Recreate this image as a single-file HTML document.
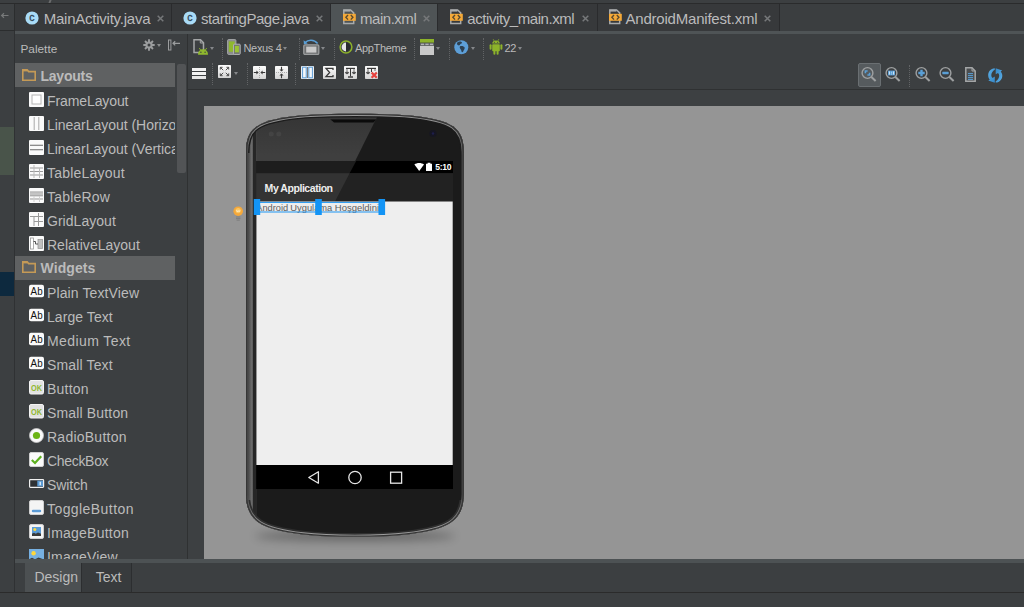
<!DOCTYPE html>
<html>
<head>
<meta charset="utf-8">
<title>main.xml - Android Studio</title>
<style>
*{box-sizing:border-box;margin:0;padding:0}
html,body{width:1024px;height:607px;overflow:hidden;background:#3c3f41;font-family:"Liberation Sans","DejaVu Sans",sans-serif;color:#bbbbbb}
.abs{position:absolute}
svg{display:block;overflow:visible}
#root{position:relative;width:1024px;height:607px;overflow:hidden;background:#3c3f41}
#topstrip{left:0;top:0;width:1024px;height:4px;background:#3c3f41;border-bottom:1px solid #2a2b2c}
#tabbar{left:15px;top:4px;width:1009px;height:27px;background:#3b3e40}
.tab{position:absolute;top:0;height:27px;background:#37393b;border-right:1px solid #2a2b2d;font-size:15px;line-height:27px;color:#bbbbbb;white-space:nowrap}
.tab.active{background:#4f5456;height:27px}
.tab .lbl{position:absolute;top:1px}
.tab .x{position:absolute;top:10.5px}
.tab .ic{position:absolute;top:6.5px}
#leftarrow{left:0;top:4px;width:15px;height:27px;background:#3e4143;border-right:1px solid #2b2d2e;border-bottom:1px solid #2b2d2e}
#tabline{left:15px;top:31px;width:1009px;height:3px;background:#4f5456}
#leftstrip{left:0;top:31px;width:15px;height:576px;background:#3c3f41;border-right:1px solid #2f3133}
#palette{left:15px;top:34px;width:172px;height:526px;background:#3c3f41;overflow:hidden}
.hdr{position:absolute;left:0;width:160px;height:24px;background:#5f6162;font-weight:bold;font-size:14px;line-height:24px;color:#bbbbbb}
.hdr span{position:absolute;left:25.5px;top:0.5px}
.hdr svg{position:absolute;left:7px;top:5.5px}
.item{position:absolute;left:0;width:160px;height:24px;font-size:14px;line-height:24px;color:#bbbbbb;white-space:nowrap;overflow:hidden}
.item span{position:absolute;left:32px;top:0.5px}
.item svg{position:absolute;left:14px;top:3.5px}
#scroll{left:162px;top:30px;width:9px;height:109px;background:#525456;border-radius:2px}
#toolbar{left:188px;top:34px;width:836px;height:55px;background:#3c3f41}
#toolline{left:188px;top:89px;width:836px;height:1px;background:#2f3132}
#canvaswrap{left:188px;top:90px;width:836px;height:470px;background:#3d4042}
#canvas{left:203.5px;top:105.5px;width:821px;height:453px;background:#959595}
#bottomline{left:15px;top:558.5px;width:1009px;height:4px;background:#4d5254}
#bottomtabs{left:15px;top:562.5px;width:1009px;height:29.5px;background:#3c3f41}
.btab{position:absolute;top:0;height:29.5px;font-size:14px;line-height:29.5px;color:#bbbbbb;text-align:center;border-right:1px solid #2f3133}
#bottombar{left:0;top:592px;width:1024px;height:15px;background:#3c3f41;border-top:1px solid #2b2b2b}
.tbtxt{position:absolute;font-size:11px;color:#bbbbbb;line-height:14px;white-space:nowrap}
.sep{position:absolute;width:1px;border-left:1px dotted #626466}
.dd{position:absolute;width:0;height:0;border-left:2.5px solid transparent;border-right:2.5px solid transparent;border-top:3px solid #85878a}
.ti{position:absolute}
</style>
</head>
<body>
<div id="root">
  <div id="topstrip" class="abs"></div>
  <div class="abs" style="left:49px;top:0;width:2px;height:3px;background:#6a6c6d;transform:skewX(-20deg)"></div>
  <div id="leftarrow" class="abs">
    <svg class="abs" style="left:1px;top:7px" width="10" height="9" viewBox="0 0 10 9"><path d="M0.5 4.5H7.5M3 2.2L0.6 4.5L3 6.8" stroke="#77797a" stroke-width="1.2" fill="none"/></svg>
  </div>
  <div id="tabbar" class="abs">
    <div class="tab" style="left:0px;width:157px">
      <svg class="ic" style="left:10.4px" width="14" height="14" viewBox="0 0 14 14"><circle cx="7" cy="7" r="6.6" fill="#a9dbf7"/><text x="6.9" y="10.2" font-size="10.5" text-anchor="middle" fill="#2c4152" stroke="#2c4152" stroke-width="0.3" font-family="Liberation Sans, sans-serif">c</text></svg>
      <span class="lbl" style="left:28.75px;letter-spacing:-0.241px">MainActivity.java</span>
      <svg class="x" style="left:142.25px" width="7" height="7" viewBox="0 0 7 7"><path d="M0.7 0.7L6.3 6.3M6.3 0.7L0.7 6.3" stroke="#76787a" stroke-width="1.5"/></svg>
    </div>
    <div class="tab" style="left:157px;width:159px">
      <svg class="ic" style="left:11.2px" width="14" height="14" viewBox="0 0 14 14"><circle cx="7" cy="7" r="6.6" fill="#a9dbf7"/><text x="6.9" y="10.2" font-size="10.5" text-anchor="middle" fill="#2c4152" stroke="#2c4152" stroke-width="0.3" font-family="Liberation Sans, sans-serif">c</text></svg>
      <span class="lbl" style="left:29.1px;letter-spacing:-0.477px">startingPage.java</span>
      <svg class="x" style="left:143.9px" width="7" height="7" viewBox="0 0 7 7"><path d="M0.7 0.7L6.3 6.3M6.3 0.7L0.7 6.3" stroke="#76787a" stroke-width="1.5"/></svg>
    </div>
    <div class="tab active" style="left:316px;width:107px">
      <svg class="ic" style="left:11.8px;top:5px" width="14" height="15" viewBox="0 0 14 15"><path d="M0.8 1H7.6L10.7 3.9V14.4H0.8Z" fill="none" stroke="#a9abac" stroke-width="1.5"/><path d="M0.8 1.6H7.4" stroke="#a9abac" stroke-width="2"/><rect x="0" y="4.8" width="12.8" height="7" fill="#f4a938"/><path d="M5 6L2.9 8.3L5 10.6M7.8 6L9.9 8.3L7.8 10.6" stroke="#5a4a30" stroke-width="1.4" fill="none"/></svg>
      <span class="lbl" style="left:29px;letter-spacing:-0.471px">main.xml</span>
      <svg class="x" style="left:92.4px" width="7" height="7" viewBox="0 0 7 7"><path d="M0.7 0.7L6.3 6.3M6.3 0.7L0.7 6.3" stroke="#76787a" stroke-width="1.5"/></svg>
    </div>
    <div class="tab" style="left:423px;width:159.5px">
      <svg class="ic" style="left:12.3px;top:5px" width="14" height="15" viewBox="0 0 14 15"><path d="M0.8 1H7.6L10.7 3.9V14.4H0.8Z" fill="none" stroke="#a9abac" stroke-width="1.5"/><path d="M0.8 1.6H7.4" stroke="#a9abac" stroke-width="2"/><rect x="0" y="4.8" width="12.8" height="7" fill="#f4a938"/><path d="M5 6L2.9 8.3L5 10.6M7.8 6L9.9 8.3L7.8 10.6" stroke="#5a4a30" stroke-width="1.4" fill="none"/></svg>
      <span class="lbl" style="left:29.3px;letter-spacing:-0.424px">activity_main.xml</span>
      <svg class="x" style="left:143.8px" width="7" height="7" viewBox="0 0 7 7"><path d="M0.7 0.7L6.3 6.3M6.3 0.7L0.7 6.3" stroke="#76787a" stroke-width="1.5"/></svg>
    </div>
    <div class="tab" style="left:582.5px;width:182px">
      <svg class="ic" style="left:11px;top:5px" width="14" height="15" viewBox="0 0 14 15"><path d="M0.8 1H7.6L10.7 3.9V14.4H0.8Z" fill="none" stroke="#a9abac" stroke-width="1.5"/><path d="M0.8 1.6H7.4" stroke="#a9abac" stroke-width="2"/><rect x="0" y="4.8" width="12.8" height="7" fill="#f4a938"/><path d="M5 6L2.9 8.3L5 10.6M7.8 6L9.9 8.3L7.8 10.6" stroke="#5a4a30" stroke-width="1.4" fill="none"/></svg>
      <span class="lbl" style="left:28px;letter-spacing:-0.21px">AndroidManifest.xml</span>
      <svg class="x" style="left:166.7px" width="7" height="7" viewBox="0 0 7 7"><path d="M0.7 0.7L6.3 6.3M6.3 0.7L0.7 6.3" stroke="#76787a" stroke-width="1.5"/></svg>
    </div>
  </div>
  <div id="tabline" class="abs"></div>
  <div id="leftstrip" class="abs">
    <div class="abs" style="left:0;top:96px;width:14px;height:48px;background:#49544a"></div>
    <div class="abs" style="left:0;top:241px;width:14px;height:24px;background:#0d293e"></div>
  </div>
  <div id="palette" class="abs">
    <div class="tbtxt" style="left:5.5px;top:8px;font-size:11.8px">Palette</div>
    <svg class="abs" style="left:128px;top:5px" width="12" height="12" viewBox="0 0 12 12"><g fill="#9b9d9e"><circle cx="6" cy="6" r="3.6"/><g stroke="#9b9d9e" stroke-width="1.9"><path d="M6 0.3V11.7M0.3 6H11.7M2 2L10 10M10 2L2 10"/></g></g><circle cx="6" cy="6" r="1.5" fill="#3c3f41"/></svg>
    <div class="dd" style="left:142px;top:10px;border-top-color:#8a8c8d"></div>
    <svg class="abs" style="left:153px;top:5px" width="14" height="12" viewBox="0 0 14 12"><rect x="0.5" y="1" width="2.4" height="10" fill="none" stroke="#9b9d9e" stroke-width="1"/><path d="M5 4.3H12M7.2 2.2L5 4.3L7.2 6.4" stroke="#9b9d9e" stroke-width="1.2" fill="none"/></svg>
    <div id="scroll" class="abs"></div>
    <div class="hdr" style="top:29px"><svg width="14" height="12" viewBox="0 0 14 12"><path d="M0.8 11.2V0.8H5.2L6.6 2.6H13.2V11.2Z" fill="none" stroke="#c59a56" stroke-width="1.6"/><path d="M0.8 1.6H5.6" stroke="#c59a56" stroke-width="1.6"/></svg><span style="letter-spacing:-0.241px">Layouts</span></div>
    <div class="item" style="top:54px"><svg width="15" height="15" viewBox="0 0 15 15"><rect width="15" height="15" rx="1" fill="#fafafa"/><rect x="3" y="3" width="9" height="9" fill="#fff" stroke="#b4b4b4" stroke-width="1"/></svg><span style="letter-spacing:-0.099px">FrameLayout</span></div>
    <div class="item" style="top:78px"><svg width="15" height="15" viewBox="0 0 15 15"><rect width="15" height="15" rx="1" fill="#fafafa"/><path d="M5.2 1V14M9.8 1V14" stroke="#a8a8a8" stroke-width="1"/></svg><span style="letter-spacing:-0.029px">LinearLayout (Horizontal)</span></div>
    <div class="item" style="top:102px"><svg width="15" height="15" viewBox="0 0 15 15"><rect width="15" height="15" rx="1" fill="#fafafa"/><path d="M1 5.2H14M1 9.8H14" stroke="#6a6a6a" stroke-width="1.1"/></svg><span style="letter-spacing:-0.029px">LinearLayout (Vertical)</span></div>
    <div class="item" style="top:126px"><svg width="15" height="15" viewBox="0 0 15 15"><rect width="15" height="15" rx="1" fill="#fafafa"/><path d="M1 4H14M1 7.5H14M1 11H14" stroke="#999" stroke-width="1"/><path d="M5 1V14M10.5 4V14" stroke="#bbb" stroke-width="1"/></svg><span style="letter-spacing:0.226px">TableLayout</span></div>
    <div class="item" style="top:150px"><svg width="15" height="15" viewBox="0 0 15 15"><rect width="15" height="15" rx="1" fill="#fafafa"/><rect x="1" y="4.5" width="13" height="3" fill="#c4c4c4"/><path d="M1 4H14M1 7.8H14M1 11H14" stroke="#999" stroke-width="1"/><path d="M5 8V14M10.5 8V14" stroke="#d0d0d0" stroke-width="1"/></svg><span style="letter-spacing:0.214px">TableRow</span></div>
    <div class="item" style="top:174px"><svg width="15" height="15" viewBox="0 0 15 15"><rect width="15" height="15" rx="1" fill="#fafafa"/><path d="M1 4.5H14M5 9.5H14" stroke="#999" stroke-width="1"/><path d="M5 4.5V14M9.5 1V14" stroke="#999" stroke-width="1"/></svg><span style="letter-spacing:0.032px">GridLayout</span></div>
    <div class="item" style="top:198px"><svg width="15" height="15" viewBox="0 0 15 15"><rect width="15" height="15" rx="1" fill="#fafafa"/><rect x="1.5" y="2" width="3" height="11" fill="#fff" stroke="#999" stroke-width="0.8"/><rect x="9" y="3.5" width="4.5" height="9" fill="#c0c0c0" stroke="#999" stroke-width="0.8"/><path d="M4.5 5.5H6.5V8H9" stroke="#555" stroke-width="1" fill="none"/></svg><span style="letter-spacing:0.012px">RelativeLayout</span></div>
    <div class="hdr" style="top:221.5px"><svg width="14" height="12" viewBox="0 0 14 12"><path d="M0.8 11.2V0.8H5.2L6.6 2.6H13.2V11.2Z" fill="none" stroke="#c59a56" stroke-width="1.6"/><path d="M0.8 1.6H5.6" stroke="#c59a56" stroke-width="1.6"/></svg><span style="letter-spacing:0.096px">Widgets</span></div>
    <div class="item" style="top:246px"><svg width="15" height="15" viewBox="0 0 15 15"><rect y="0.8" width="15" height="12.5" rx="2" fill="#fafafa"/><text x="1.6" y="11.3" font-size="11.5" fill="#111" font-family="Liberation Sans, sans-serif" textLength="12" lengthAdjust="spacingAndGlyphs">Ab</text></svg><span style="letter-spacing:0.118px">Plain TextView</span></div>
    <div class="item" style="top:270px"><svg width="15" height="15" viewBox="0 0 15 15"><rect y="0.8" width="15" height="12.5" rx="2" fill="#fafafa"/><text x="1.6" y="11.3" font-size="11.5" fill="#111" font-family="Liberation Sans, sans-serif" textLength="12" lengthAdjust="spacingAndGlyphs">Ab</text></svg><span style="letter-spacing:0.067px">Large Text</span></div>
    <div class="item" style="top:294px"><svg width="15" height="15" viewBox="0 0 15 15"><rect y="0.8" width="15" height="12.5" rx="2" fill="#fafafa"/><text x="1.6" y="11.3" font-size="11.5" fill="#111" font-family="Liberation Sans, sans-serif" textLength="12" lengthAdjust="spacingAndGlyphs">Ab</text></svg><span style="letter-spacing:0.408px">Medium Text</span></div>
    <div class="item" style="top:318px"><svg width="15" height="15" viewBox="0 0 15 15"><rect y="0.8" width="15" height="12.5" rx="2" fill="#fafafa"/><text x="1.6" y="11.3" font-size="11.5" fill="#111" font-family="Liberation Sans, sans-serif" textLength="12" lengthAdjust="spacingAndGlyphs">Ab</text></svg><span style="letter-spacing:0.147px">Small Text</span></div>
    <div class="item" style="top:342px"><svg width="15" height="15" viewBox="0 0 15 15"><rect x="0.5" y="0.5" width="14" height="13.5" rx="1.5" fill="#e2e2e2" stroke="#f4f4f4" stroke-width="1"/><text x="2" y="10.6" font-size="9.2" font-weight="bold" fill="#8fb731" font-family="Liberation Sans, sans-serif" textLength="11" lengthAdjust="spacingAndGlyphs">OK</text></svg><span style="letter-spacing:0.219px">Button</span></div>
    <div class="item" style="top:366px"><svg width="15" height="15" viewBox="0 0 15 15"><rect x="0.5" y="0.5" width="14" height="13.5" rx="1.5" fill="#e2e2e2" stroke="#f4f4f4" stroke-width="1"/><text x="2" y="10.6" font-size="9.2" font-weight="bold" fill="#8fb731" font-family="Liberation Sans, sans-serif" textLength="11" lengthAdjust="spacingAndGlyphs">OK</text></svg><span style="letter-spacing:0.16px">Small Button</span></div>
    <div class="item" style="top:390px"><svg width="15" height="15" viewBox="0 0 15 15"><circle cx="7.5" cy="7.5" r="7" fill="#fafafa" stroke="#c8c8c8" stroke-width="0.8"/><circle cx="7.5" cy="7.5" r="3.6" fill="#6db516"/></svg><span style="letter-spacing:0.24px">RadioButton</span></div>
    <div class="item" style="top:414px"><svg width="15" height="15" viewBox="0 0 15 15"><rect x="0.5" y="0.5" width="14" height="14" rx="1.5" fill="#fafafa" stroke="#d0d0d0" stroke-width="1"/><path d="M2.8 8L6 11L12.2 4.2" stroke="#5cb01e" stroke-width="2.2" fill="none"/></svg><span style="letter-spacing:-0.314px">CheckBox</span></div>
    <div class="item" style="top:438px"><svg width="15" height="15" viewBox="0 0 15 15"><rect x="0.6" y="3.6" width="14" height="7.8" rx="0.8" fill="#2e3134" stroke="#f0f0f0" stroke-width="1.2"/><rect x="8.3" y="4.6" width="5.7" height="5.8" fill="#5b9bd5"/><rect x="10.5" y="5.8" width="1.5" height="3.4" fill="#d8e8f5"/></svg><span style="letter-spacing:-0.072px">Switch</span></div>
    <div class="item" style="top:462px"><svg width="15" height="15" viewBox="0 0 15 15"><rect x="0.5" y="0.5" width="14" height="14" rx="1.5" fill="#f4f4f4" stroke="#d0d0d0" stroke-width="1"/><rect x="2.8" y="9.8" width="9.4" height="2.4" rx="1.2" fill="#5b9bd5"/></svg><span style="letter-spacing:0.43px">ToggleButton</span></div>
    <div class="item" style="top:486px"><svg width="15" height="15" viewBox="0 0 15 15"><rect x="0.5" y="0.5" width="14" height="14" rx="1.5" fill="#f4f4f4" stroke="#d0d0d0" stroke-width="1"/><rect x="3" y="3" width="9" height="9" fill="#5b9bd5"/><circle cx="5.8" cy="5.6" r="1.5" fill="#ffd83b"/><path d="M3 12V9.8L5 8.8L6.8 9.8L9 8.6L12 9.8V12Z" fill="#3a3a3a"/></svg><span style="letter-spacing:0.237px">ImageButton</span></div>
    <div class="item" style="top:510px"><svg width="15" height="15" viewBox="0 0 15 15"><rect x="0" y="1" width="15" height="14" fill="#76b0e2"/><circle cx="4.6" cy="5.2" r="2.2" fill="#ffd83b"/><path d="M0 15V11.2L3 9.8L6 11.2L9.5 9.6L15 11.4V15Z" fill="#3a3a3a"/></svg><span style="letter-spacing:0.198px">ImageView</span></div>
  </div>
  <div class="abs" style="left:187px;top:34px;width:1px;height:526px;background:#2f3132"></div>
  <div id="toolbar" class="abs"></div>
  <div id="toolline" class="abs"></div>
  <!-- toolbar row 1 -->
  <svg class="ti" style="left:193px;top:39px" width="16" height="16" viewBox="0 0 16 16"><path d="M1 0.8H7.5L10.5 3.8V13.5H1Z" fill="none" stroke="#a4a6a7" stroke-width="1.5"/><path d="M7.3 0.8V4H10.5" fill="none" stroke="#a4a6a7" stroke-width="1"/><path d="M5 15.8C5 12 7.2 10.2 10 10.2C12.8 10.2 15 12 15 15.8Z" fill="#8fb82e"/><path d="M6.3 9L7.6 11M13.7 9L12.4 11" stroke="#8fb82e" stroke-width="0.9"/><circle cx="7.9" cy="13.2" r="0.7" fill="#3c3f41"/><circle cx="12.1" cy="13.2" r="0.7" fill="#3c3f41"/></svg>
  <div class="dd" style="left:209.5px;top:47px"></div>
  <div class="sep" style="left:222px;top:38px;height:22px"></div>
  <svg class="ti" style="left:226.5px;top:39px" width="14" height="16" viewBox="0 0 14 16"><rect x="0.6" y="0.6" width="8.3" height="14.8" rx="1" fill="#8a8c8d" stroke="#a4a6a7" stroke-width="1"/><rect x="1.8" y="2.4" width="5.9" height="10.4" fill="#8fb82e"/><rect x="6.6" y="5.2" width="6.6" height="10.2" rx="0.8" fill="#6d6f70" stroke="#b4b6b7" stroke-width="1"/><rect x="7.9" y="6.8" width="4" height="6.6" fill="#9bc433"/></svg>
  <div class="tbtxt" style="left:243.5px;top:41px;letter-spacing:-0.34px">Nexus 4</div>
  <div class="dd" style="left:283px;top:47px"></div>
  <div class="sep" style="left:299px;top:38px;height:22px"></div>
  <svg class="ti" style="left:303px;top:39px" width="17" height="16" viewBox="0 0 17 16"><rect x="0.8" y="5.8" width="15" height="9.6" rx="1.2" fill="#6c6e6f" stroke="#9c9e9f" stroke-width="1.3"/><rect x="3.2" y="7.6" width="10.2" height="6" fill="#c9c9c9"/><path d="M2.2 3.6C5 0.4 11 0.2 14.6 4.4" fill="none" stroke="#5a9fd6" stroke-width="1.5"/><path d="M0.6 1.2L0.9 5.2L4.8 4.6Z" fill="#5a9fd6"/></svg>
  <div class="dd" style="left:321px;top:47px"></div>
  <div class="sep" style="left:333.5px;top:38px;height:22px"></div>
  <svg class="ti" style="left:339px;top:40px" width="14" height="14" viewBox="0 0 14 14"><circle cx="7" cy="7" r="5.9" fill="#3a3d3f" stroke="#8db32a" stroke-width="1.5"/><path d="M7 2.6A4.4 4.4 0 0 0 7 11.4Z" fill="#e6e6e6"/><path d="M7 2.6A4.4 4.4 0 0 1 7 11.4Z" fill="#2a2c2e"/></svg>
  <div class="tbtxt" style="left:355px;top:41px;letter-spacing:-0.33px">AppTheme</div>
  <div class="sep" style="left:414px;top:38px;height:22px"></div>
  <svg class="ti" style="left:419.5px;top:39px" width="14" height="16" viewBox="0 0 14 16"><rect x="0" y="0" width="14" height="3.6" fill="#8db32a"/><rect x="0" y="4" width="14" height="2.6" fill="#55585a"/><rect x="0.8" y="4.6" width="3.4" height="1.5" fill="#b0b2b3"/><rect x="5.3" y="4.6" width="3.4" height="1.5" fill="#b0b2b3"/><rect x="9.8" y="4.6" width="3.4" height="1.5" fill="#b0b2b3"/><rect x="0" y="6.8" width="14" height="9.2" fill="#c9c9c9"/></svg>
  <div class="dd" style="left:436px;top:47px"></div>
  <div class="sep" style="left:448.5px;top:38px;height:22px"></div>
  <svg class="ti" style="left:454px;top:39.7px" width="14.6" height="14.6" viewBox="0 0 15 15"><circle cx="7.5" cy="7.5" r="7.2" fill="#5d9fd8"/><path d="M3.4 2.6C5 1.2 7.4 1.4 8.4 2.8C7.6 4 6.4 3.8 6 5.2C5 6 3.6 5.4 3 4.2Z" fill="#2e4152"/><path d="M6.2 6.4C7.8 5.6 10.2 6.2 11 7.6C11.2 9.2 10 10 9.6 11.6C9 13 7.8 13 7.6 11.4C7.6 10 6.4 9.4 6 8.2C5.8 7.4 5.8 6.8 6.2 6.4Z" fill="#2e4152"/></svg>
  <div class="dd" style="left:470.5px;top:47px"></div>
  <div class="sep" style="left:483px;top:38px;height:22px"></div>
  <svg class="ti" style="left:488.7px;top:39px" width="14" height="16" viewBox="0 0 14 16"><g fill="#8db32a"><path d="M3.2 4.6C3.2 2.6 4.8 1.4 7 1.4C9.2 1.4 10.8 2.6 10.8 4.6Z"/><rect x="3.2" y="5.2" width="7.6" height="7" rx="0.8"/><rect x="0.6" y="5.2" width="2" height="5.6" rx="1"/><rect x="11.4" y="5.2" width="2" height="5.6" rx="1"/><rect x="4.4" y="11" width="2" height="4.8" rx="1"/><rect x="7.6" y="11" width="2" height="4.8" rx="1"/></g><path d="M4.2 0.2L5.2 2M9.8 0.2L8.8 2" stroke="#8db32a" stroke-width="0.7"/><circle cx="5.4" cy="3.2" r="0.55" fill="#3c3f41"/><circle cx="8.6" cy="3.2" r="0.55" fill="#3c3f41"/></svg>
  <div class="tbtxt" style="left:504.5px;top:41px;letter-spacing:-0.4px">22</div>
  <div class="dd" style="left:517.7px;top:47px"></div>
  <!-- toolbar row 2 -->
  <svg class="ti" style="left:192px;top:68px" width="14" height="11" viewBox="0 0 14 11"><rect y="0" width="14" height="3" fill="#f2f2f2"/><rect y="4" width="14" height="3" fill="#f2f2f2"/><rect y="8" width="14" height="3" fill="#e6e6e6"/></svg>
  <div class="sep" style="left:212.3px;top:63px;height:22px"></div>
  <svg class="ti" style="left:218px;top:65px" width="13" height="13" viewBox="0 0 13 13"><defs><linearGradient id="bg" x1="0" y1="0" x2="0" y2="1"><stop offset="0" stop-color="#fcfcfc"/><stop offset="1" stop-color="#d4d4d4"/></linearGradient></defs><rect width="13" height="13" rx="0.8" fill="url(#bg)"/><g stroke="#3c3c3c" stroke-width="0.9" fill="none"><path d="M2.5 2.5L5.2 5.2M10.5 2.5L7.8 5.2M2.5 10.5L5.2 7.8M10.5 10.5L7.8 7.8"/><path d="M2.3 4.6V2.3H4.6M8.4 2.3H10.7V4.6M2.3 8.4V10.7H4.6M8.4 10.7H10.7V8.4"/></g></svg>
  <div class="dd" style="left:234.3px;top:72px"></div>
  <div class="sep" style="left:247px;top:63px;height:22px"></div>
  <svg class="ti" style="left:253px;top:66px" width="13" height="13" viewBox="0 0 13 13"><rect width="13" height="13" rx="0.8" fill="url(#bg)"/><path d="M6.5 1V12" stroke="#999" stroke-width="0.8" stroke-dasharray="1 1"/><path d="M0.8 6.5H5M8 6.5H12.2" stroke="#383838" stroke-width="1.1"/><path d="M3.4 4.4L5.6 6.5L3.4 8.6ZM9.6 4.4L7.4 6.5L9.6 8.6Z" fill="#383838"/></svg>
  <svg class="ti" style="left:274.5px;top:66px" width="13" height="13" viewBox="0 0 13 13"><rect width="13" height="13" rx="0.8" fill="url(#bg)"/><path d="M1 6.5H12" stroke="#999" stroke-width="0.8" stroke-dasharray="1 1"/><path d="M6.5 0.8V5M6.5 8V12.2" stroke="#383838" stroke-width="1.1"/><path d="M4.4 3.4L6.5 5.6L8.6 3.4ZM4.4 9.6L6.5 7.4L8.6 9.6Z" fill="#383838"/></svg>
  <div class="sep" style="left:295px;top:63px;height:22px"></div>
  <svg class="ti" style="left:301px;top:66px" width="13" height="13" viewBox="0 0 13 13"><rect width="13" height="13" rx="0.8" fill="#e9eef3"/><rect x="1.6" y="1.2" width="3.6" height="10.6" fill="#f4f8fb" stroke="#5b9bd5" stroke-width="1"/><rect x="7.8" y="1.2" width="3.6" height="10.6" fill="#f4f8fb" stroke="#5b9bd5" stroke-width="1"/><rect x="6" y="1" width="1" height="11" fill="#777"/></svg>
  <svg class="ti" style="left:322.7px;top:66px" width="13" height="13" viewBox="0 0 13 13"><rect width="13" height="13" rx="0.8" fill="url(#bg)"/><path d="M10 4V2.4H3L6.6 6.5L3 10.6H10V9" fill="none" stroke="#383838" stroke-width="1.3"/></svg>
  <svg class="ti" style="left:343.7px;top:66px" width="13" height="13" viewBox="0 0 13 13"><rect width="13" height="13" rx="0.8" fill="url(#bg)"/><g stroke="#383838" fill="none"><path d="M2 2.4H11" stroke-width="1.2"/><path d="M6.5 2V10.4" stroke-width="1"/><path d="M4 11H9" stroke-width="1.4"/><path d="M1.4 6.4C1.4 8.2 4.6 8.2 4.6 6.4ZM8.4 6.4C8.4 8.2 11.6 8.2 11.6 6.4Z" stroke-width="0.9"/><path d="M3 2.4V6.4M10 2.4V6.4" stroke-width="0.7"/></g></svg>
  <svg class="ti" style="left:364.7px;top:66px" width="13" height="13" viewBox="0 0 13 13"><rect width="13" height="13" rx="0.8" fill="url(#bg)"/><g stroke="#383838" fill="none"><path d="M2 2.4H11" stroke-width="1.2"/><path d="M6.5 2V6" stroke-width="1"/><path d="M1.4 6.4C1.4 8.2 4.6 8.2 4.6 6.4Z" stroke-width="0.9"/><path d="M3 2.4V6.4M10 2.4V5" stroke-width="0.7"/></g><path d="M6.6 6.4L11.8 11.8M11.8 6.4L6.6 11.8" stroke="#e8423e" stroke-width="2.2"/></svg>
  <!-- right zoom tools -->
  <div class="abs" style="left:858px;top:63px;width:23px;height:24px;background:#565b5e;border:1px solid #6a6f72;border-radius:2px"></div>
  <svg class="ti" style="left:860px;top:66px" width="18" height="18" viewBox="0 0 18 18"><circle cx="7.5" cy="7" r="5.4" fill="none" stroke="#9ea0a1" stroke-width="1.4"/><path d="M11.4 11L15.6 15" stroke="#9ea0a1" stroke-width="2"/><path d="M4.6 4.2H7.6V5.8H6.2V7.2H4.6ZM10.4 9.8H7.4V8.2H8.8V6.8H10.4Z" fill="#5a9fd6"/></svg>
  <svg class="ti" style="left:884px;top:66px" width="18" height="18" viewBox="0 0 18 18"><circle cx="7.5" cy="7" r="5.4" fill="none" stroke="#9ea0a1" stroke-width="1.4"/><path d="M11.4 11L15.6 15" stroke="#9ea0a1" stroke-width="2"/><rect x="4" y="4.6" width="7" height="4.8" fill="#5a9fd6"/><path d="M5.4 5.4V8.6M9.6 5.4V8.6" stroke="#e8f1f8" stroke-width="0.9"/><rect x="7.1" y="5.8" width="0.8" height="0.8" fill="#e8f1f8"/><rect x="7.1" y="7.6" width="0.8" height="0.8" fill="#e8f1f8"/></svg>
  <div class="sep" style="left:909px;top:65px;height:22px"></div>
  <svg class="ti" style="left:913.5px;top:66px" width="18" height="18" viewBox="0 0 18 18"><circle cx="7.5" cy="7" r="5.4" fill="none" stroke="#9ea0a1" stroke-width="1.4"/><path d="M11.4 11L15.6 15" stroke="#9ea0a1" stroke-width="2"/><path d="M6.3 3.8H8.7V5.8H10.7V8.2H8.7V10.2H6.3V8.2H4.3V5.8H6.3Z" fill="#5a9fd6"/></svg>
  <svg class="ti" style="left:937.8px;top:66px" width="18" height="18" viewBox="0 0 18 18"><circle cx="7.5" cy="7" r="5.4" fill="none" stroke="#9ea0a1" stroke-width="1.4"/><path d="M11.4 11L15.6 15" stroke="#9ea0a1" stroke-width="2"/><rect x="4.3" y="5.8" width="6.4" height="2.4" rx="0.6" fill="#5a9fd6"/></svg>
  <svg class="ti" style="left:965px;top:67px" width="11" height="15" viewBox="0 0 11 15"><path d="M0.8 0.8H7L10.2 4V14.2H0.8Z" fill="#4a4d4f" stroke="#a4a6a7" stroke-width="1.5"/><path d="M7 0.8V4H10.2" fill="none" stroke="#a4a6a7" stroke-width="1"/><path d="M3 6.6H8M3 8.6H8M3 10.6H8M3 12.4H8" stroke="#5a9fd6" stroke-width="1"/></svg>
  <svg class="ti" style="left:988px;top:67.5px" width="15" height="15" viewBox="0 0 15 15"><defs><linearGradient id="rf" x1="0" y1="0" x2="1" y2="1"><stop offset="0" stop-color="#5eb0e8"/><stop offset="1" stop-color="#3488c8"/></linearGradient></defs><path id="rfh" d="M6.8 0.3C2.6 0.6 0.2 3.8 0.2 7.2C0.2 9 0.8 10.4 1.8 11.5L0.3 12.5L6.8 14.7V8.6L4.5 10C3.7 9.3 3.3 8.3 3.3 7.2C3.3 5 4.6 3 6.8 1.7Z" fill="url(#rf)"/><use href="#rfh" transform="rotate(180 7.25 7.45)"/></svg>
  <div id="canvaswrap" class="abs"></div>
  <div id="canvas" class="abs"></div>
  <!-- phone -->
  <svg class="abs" style="left:226px;top:105px" width="260" height="454" viewBox="226 105 260 454">
    <defs>
      <filter id="blur6" x="-20%" y="-200%" width="140%" height="500%"><feGaussianBlur stdDeviation="5"/></filter>
      <clipPath id="topc"><rect x="226" y="105" width="260" height="48"/></clipPath><clipPath id="botc"><rect x="226" y="500" width="260" height="60"/></clipPath><clipPath id="bodyclip"><path id="bodyp" d="M246 152C246 128 257 120 300 115.6C325 113.2 385 113.2 409.7 115.6C452.7 120 463.7 128 463.7 152V494C463.7 522 446.7 529.6 406.7 534.4C380 537.6 330 537.6 303 534.4C263 529.6 246 522 246 494Z"/></clipPath>
      <linearGradient id="leftband" x1="0" y1="0" x2="1" y2="0"><stop offset="0" stop-color="#3a3a3a"/><stop offset="0.22" stop-color="#4a4a4a"/><stop offset="0.5" stop-color="#6a6a6a"/><stop offset="0.75" stop-color="#484848"/><stop offset="1" stop-color="#222"/></linearGradient>
      <linearGradient id="glare" x1="0" y1="0" x2="0" y2="1"><stop offset="0" stop-color="#fff" stop-opacity="0.11"/><stop offset="0.5" stop-color="#fff" stop-opacity="0.16"/><stop offset="1" stop-color="#fff" stop-opacity="0.13"/></linearGradient>
      <linearGradient id="silver" gradientUnits="userSpaceOnUse" x1="0" y1="113" x2="0" y2="537"><stop offset="0" stop-color="#9a9a9a"/><stop offset="0.035" stop-color="#8a8a8a"/><stop offset="0.1" stop-color="#4a4a4a"/><stop offset="0.9" stop-color="#4a4a4a"/><stop offset="0.965" stop-color="#8a8a8a"/><stop offset="1" stop-color="#a0a0a0"/></linearGradient><linearGradient id="rimtop" x1="0" y1="0" x2="1" y2="0"><stop offset="0" stop-color="#555"/><stop offset="0.3" stop-color="#8c8c8c"/><stop offset="0.7" stop-color="#8c8c8c"/><stop offset="1" stop-color="#555"/></linearGradient>
    </defs>
    <ellipse cx="355" cy="536" rx="100" ry="5" fill="#000" opacity="0.32" filter="url(#blur6)"/>
    <use href="#bodyp" fill="#1b1b1b"/>
    <g clip-path="url(#bodyclip)">
      <rect x="246" y="105" width="11" height="440" fill="url(#leftband)"/>
      <path d="M253 112H379.5L335 201.5H253Z" fill="url(#glare)"/>
      <!-- screen -->
      <rect x="256" y="161" width="197" height="12.2" fill="#000"/>
      <rect x="256" y="173.2" width="197" height="28.3" fill="#222"/>
      <path d="M256 161H356.2L349.6 173.2H256Z" fill="#1d1d1d"/>
      <path d="M256 173.2H349.6L335 201.5H256Z" fill="#333333"/>
      <rect x="256.3" y="201.5" width="196.4" height="263.5" fill="#eeeeee"/>
      <rect x="256" y="465" width="197" height="24" fill="#000"/>
      <rect x="253" y="105" width="3.2" height="440" fill="#262626"/>
    </g>
    <g clip-path="url(#bodyclip)">
      <use href="#bodyp" fill="none" stroke="#1c1c1c" stroke-width="7" clip-path="url(#topc)"/>
      <use href="#bodyp" fill="none" stroke="#2e2e2e" stroke-width="7.6" clip-path="url(#botc)"/>
      <use href="#bodyp" fill="none" stroke="url(#silver)" stroke-width="4.2"/>
      <use href="#bodyp" fill="none" stroke="#363636" stroke-width="2.4"/>
    </g>
    <!-- speaker -->
    <path d="M330 119H376.5L373.5 122.4H334Z" fill="#0b0b0b"/>
    <path d="M330 119H376.5" stroke="#3a3a3a" stroke-width="0.8"/>
    <circle cx="271.2" cy="134" r="2.5" fill="#fff" opacity="0.05"/>
    <circle cx="278.8" cy="134" r="2.5" fill="#fff" opacity="0.05"/>
    <circle cx="433" cy="133.5" r="3.6" fill="#161622"/>
    <circle cx="433" cy="133.5" r="1.2" fill="#1e1e4a"/>
    <!-- status icons -->
    <path d="M414.4 164.6C417 162.6 421.4 162.6 424 164.6L419.2 171Z" fill="#fff"/>
    <path d="M427.6 162.8H430.4V163.8H432V171H426V163.8H427.6Z" fill="#fff"/>
    <text x="435.2" y="169.9" font-size="8.6" font-weight="bold" fill="#fff" font-family="Liberation Sans, sans-serif" letter-spacing="-0.3">5:10</text>
    <text x="264.6" y="191.5" font-size="10.5" font-weight="bold" fill="#eeeeee" font-family="Liberation Sans, sans-serif" letter-spacing="-0.45">My Application</text>
    <!-- selected textview -->
    <text y="210.6" font-size="9" fill="#606060" font-family="Liberation Sans, sans-serif"><tspan x="256.3" textLength="31.8" lengthAdjust="spacingAndGlyphs">Android</tspan> <tspan x="290.3" textLength="42" lengthAdjust="spacingAndGlyphs">Uygulama</tspan> <tspan x="334.8" textLength="49" lengthAdjust="spacingAndGlyphs">Hoşgeldiniz</tspan></text>
    <rect x="257" y="202.4" width="125" height="9.6" fill="none" stroke="#1d95f2" stroke-width="1"/>
    <rect x="253.8" y="199" width="6.4" height="16" fill="#1394f5"/>
    <rect x="315.2" y="199" width="6.6" height="16" fill="#1394f5"/>
    <rect x="378.5" y="199" width="6.6" height="16" fill="#1394f5"/>
    <!-- nav -->
    <path d="M318.4 471.8V483.2L308.8 477.5Z" fill="none" stroke="#e6e6e6" stroke-width="1.3" stroke-linejoin="round"/>
    <circle cx="355" cy="477.5" r="6.2" fill="none" stroke="#e6e6e6" stroke-width="1.3"/>
    <rect x="390.6" y="472.2" width="11" height="11" fill="none" stroke="#e6e6e6" stroke-width="1.3"/>
    <!-- bulb -->
    <circle cx="238.2" cy="211.2" r="4.8" fill="#f5a83a"/>
    <circle cx="238.2" cy="210.6" r="2.6" fill="#fbc765"/>
    <path d="M236.4 210L237.3 212L238.2 210.4L239.1 212L240 210" stroke="#fff3d6" stroke-width="0.6" fill="none"/>
    <path d="M236 217H240.4M236 218.6H240.4M236.6 220.2H239.8" stroke="#7c7c7c" stroke-width="0.9"/>
  </svg>
  <div id="bottomline" class="abs"></div>
  <div id="bottomtabs" class="abs">
    <div class="btab" style="left:10px;width:57px;background:#4c5052;text-align:left;padding-left:9.4px;border-right:1px solid #2c2e30">Design</div>
    <div class="btab" style="left:67px;width:49.5px;background:#383b3d;text-align:left;padding-left:13.7px;border-right:1px solid #2c2e30">Text</div>
  </div>
  <div id="bottombar" class="abs"></div>
</div>
</body>
</html>
